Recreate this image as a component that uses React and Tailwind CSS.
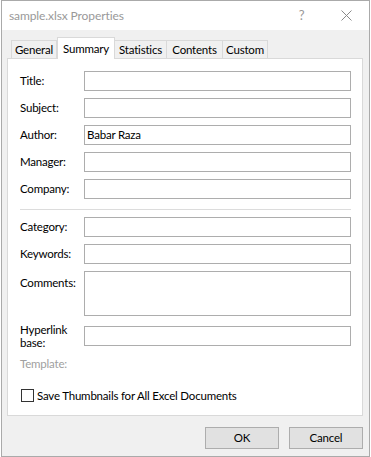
import React from "react"

const topFields = [
  { label: "Title:", value: "" },
  { label: "Subject:", value: "" },
  { label: "Author:", value: "Babar Raza" },
  { label: "Manager:", value: "" },
  { label: "Company:", value: "" }
]

const tabs = [
  { name: "General", w: "w-[46px]" },
  { name: "Summary", w: "w-[58px]", active: true },
  { name: "Statistics", w: "w-[53px]" },
  { name: "Contents", w: "w-[57px]" },
  { name: "Custom", w: "w-[46px]" }
]

const Field = ({ label, value }) => (
  <div className="flex items-center mb-[7px]">
    <div className="w-[64px] shrink-0">{label}</div>
    <div className="flex-1 h-[20px] border border-[#adadad] bg-white pl-[2px] flex items-center">
      {value}
    </div>
  </div>
)

const App = () => {
  return (
    <div
      className="w-[371px] h-[457px] bg-white text-[11.5px] tracking-[-0.2px] text-black"
      style={{ fontFamily: "Lato, 'Noto Sans', sans-serif" }}
    >
      <div className="ml-[1px] w-[369px] h-full border border-[#aaaaaa] flex flex-col">
        {/* title bar */}
        <div className="h-[29px] shrink-0 bg-white flex items-center">
          <span className="pl-[7px] text-[12px] tracking-[-0.1px] text-[#999999]">sample.xlsx Properties</span>
          <div className="ml-auto flex h-full">
            <div className="w-[45px] h-full flex items-center justify-center text-[#999999] text-[13px]">
              ?
            </div>
            <div className="w-[45px] h-full flex items-center justify-center">
              <svg width="11" height="11" viewBox="0 0 11 11">
                <path d="M0.5 0.5 L10.5 10.5 M10.5 0.5 L0.5 10.5" stroke="#8a8a8a" strokeWidth="1" fill="none" />
              </svg>
            </div>
          </div>
        </div>

        {/* body */}
        <div className="flex-1 bg-[#f0f0f0] pl-[5px] pt-[7px] flex flex-col">
          <div className="h-[21px] flex items-end pl-[4px]">
            {tabs.map(tab =>
              tab.active ? (
                <div
                  key={tab.name}
                  className={`${tab.w} h-[22px] -mb-px relative z-10 bg-white border border-b-0 border-[#d9d9d9] flex items-start justify-center pt-[2px]`}
                >
                  {tab.name}
                </div>
              ) : (
                <div
                  key={tab.name}
                  className={`${tab.w} h-[18px] -ml-px first:ml-0 bg-[#f0f0f0] border border-b-0 border-[#d9d9d9] flex items-center justify-center`}
                >
                  {tab.name}
                </div>
              )
            )}
          </div>

          <div className="w-[356px] h-[358px] bg-white border border-[#d9d9d9] pl-[12px] pr-[11px] pt-[12px] flex flex-col">
            {topFields.map(f => (
              <Field key={f.label} label={f.label} value={f.value} />
            ))}

            <div className="h-px shrink-0 bg-[#dcdcdc] mt-[3px] mb-[7px]" />

            <Field label="Category:" value="" />
            <Field label="Keywords:" value="" />

            <div className="flex items-start mb-[7px]">
              <div className="w-[64px] shrink-0 pt-[3px]">Comments:</div>
              <div className="flex-1 h-[45px] border border-[#adadad] bg-white" />
            </div>

            <div className="flex items-center">
              <div className="w-[64px] shrink-0 flex flex-col">
                <div className="h-[13px] flex items-center">Hyperlink</div>
                <div className="h-[13px] flex items-center">base:</div>
              </div>
              <div className="flex-1 h-[20px] border border-[#adadad] bg-white" />
            </div>

            <div className="h-[15px] mt-[7px] flex items-center text-[#a0a0a0]">Template:</div>

            <div className="h-[13px] mt-[18px] flex items-center pl-[1px]">
              <div className="w-[13px] h-[13px] border border-[#333333] bg-white shrink-0" />
              <span className="ml-[3px]">Save Thumbnails for All Excel Documents</span>
            </div>
          </div>

          <div className="w-[356px] flex justify-end gap-[10px] mt-[11px]">
            <button className="w-[74px] h-[22px] bg-[#e1e1e1] border border-[#adadad] flex items-center justify-center">
              OK
            </button>
            <button className="w-[74px] h-[22px] bg-[#e1e1e1] border border-[#adadad] flex items-center justify-center">
              Cancel
            </button>
          </div>
        </div>
      </div>
    </div>
  )
}

export default App
